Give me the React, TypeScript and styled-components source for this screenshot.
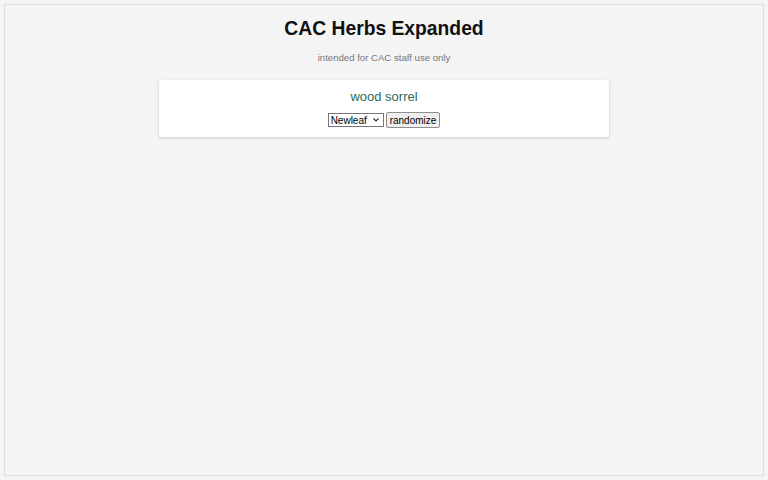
import React from 'react';
import styled, { createGlobalStyle } from 'styled-components';

const GlobalStyle = createGlobalStyle`
  html, body {
    margin: 0;
    padding: 0;
    background: #f4f4f4;
  }
  body {
    padding: 4px;
    font-family: "Liberation Sans", Arial, sans-serif;
  }
`;

const Page = styled.div`
  box-sizing: border-box;
  height: 472px;
  border: 1px solid #dcdcdc;
  background: #f4f4f4;
  display: flex;
  flex-direction: column;
  align-items: center;
  padding-top: 13px;
`;

const Title = styled.h1`
  margin: 0;
  font-size: 19.3px;
  line-height: 22px;
  font-weight: bold;
  color: #111;
`;

const Subtitle = styled.p`
  margin: 12px 0 0;
  font-size: 9.6px;
  line-height: 11px;
  color: #777;
`;

const Card = styled.div`
  box-sizing: border-box;
  width: 450px;
  margin-top: 17px;
  padding: 9px 0 9px;
  background: #fff;
  border-radius: 3px;
  box-shadow: 0 1px 3px rgba(0, 0, 0, 0.18);
  display: flex;
  flex-direction: column;
  align-items: center;
  gap: 8px;
`;

const HerbName = styled.div`
  font-size: 13px;
  color: #2f6a52;
`;

const Controls = styled.div`
  display: flex;
  align-items: center;
  gap: 2px;
`;

const PickerWrap = styled.div`
  position: relative;
  display: flex;
`;

const Picker = styled.select`
  appearance: none;
  -webkit-appearance: none;
  box-sizing: border-box;
  font-family: "Liberation Sans", Arial, sans-serif;
  font-size: 10px;
  width: 56px;
  height: 14px;
  padding: 0 12px 0 2px;
  border: 1px solid #767676;
  border-radius: 0;
  background: #fff;
  color: #000;
  outline: none;
`;

const Chevron = styled.svg`
  position: absolute;
  right: 5px;
  top: 5px;
  width: 6px;
  height: 4px;
  pointer-events: none;
`;

const Button = styled.button`
  font-family: "Liberation Sans", Arial, sans-serif;
  font-size: 10px;
  height: 16px;
  padding: 0 3px;
  border: 1px solid #8f8f8f;
  border-radius: 2px;
  background: #efefef;
  color: #000;
`;

export default function App() {
  return (
    <>
      <GlobalStyle />
      <Page>
        <Title>CAC Herbs Expanded</Title>
        <Subtitle>intended for CAC staff use only</Subtitle>
        <Card>
          <HerbName>wood sorrel</HerbName>
          <Controls>
            <PickerWrap>
              <Picker defaultValue="newleaf">
                <option value="newleaf">Newleaf</option>
              </Picker>
              <Chevron viewBox="0 0 6 4">
                <path d="M0.5 0.5 L3 3 L5.5 0.5" fill="none" stroke="#333" strokeWidth="1.2" />
              </Chevron>
            </PickerWrap>
            <Button>randomize</Button>
          </Controls>
        </Card>
      </Page>
    </>
  );
}
